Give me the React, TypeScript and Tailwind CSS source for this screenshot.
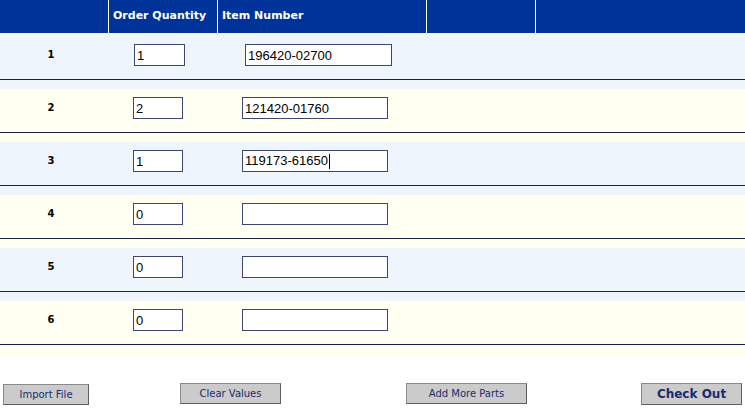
const rows = [
  { n: 1, qty: "1", item: "196420-02700" },
  { n: 2, qty: "2", item: "121420-01760" },
  { n: 3, qty: "1", item: "119173-61650", caret: true },
  { n: 4, qty: "0", item: "" },
  { n: 5, qty: "0", item: "" },
  { n: 6, qty: "0", item: "" },
];

const field =
  "h-[22px] border border-[#3c4670] bg-white px-[2px] font-['Liberation_Sans',Arial,sans-serif] text-[13px] leading-[20px] text-black outline-none";

function OrderRow({ n, qty, item, caret }: { n: number; qty: string; item: string; caret?: boolean }) {
  const first = n === 1;
  const last = n === 6;
  const bg = n % 2 === 1 ? "bg-[#eff5fd]" : "bg-[#fffff2]";
  return (
    <div className={bg}>
      <div className={`flex items-start ${first ? "h-[46px] pt-[11px]" : "h-[43px] pt-[8px]"}`}>
        <div className="w-[102px] text-center text-[10px] font-bold leading-[22px] text-black">{n}</div>
        {first ? (
          <input readOnly defaultValue={qty} className={`${field} ml-[32px] w-[51px]`} />
        ) : (
          <input readOnly defaultValue={qty} className={`${field} ml-[31px] w-[50px]`} />
        )}
        {caret ? (
          <div className={`${field} ml-[59px] flex w-[146px] items-center`}>
            <span>{item}</span>
            <span className="ml-[1px] h-[15px] w-px bg-black" />
          </div>
        ) : first ? (
          <input readOnly defaultValue={item} className={`${field} ml-[60px] w-[147px]`} />
        ) : (
          <input readOnly defaultValue={item} className={`${field} ml-[59px] w-[146px]`} />
        )}
      </div>
      <div className="h-px bg-[#1b1f4b]" />
      <div className={last ? "h-[12px]" : "h-[9px]"} />
    </div>
  );
}

const btn =
  "h-[21px] border border-[#8a8a8a] border-r-[#5e5e5e] border-b-[#5e5e5e] bg-[#cbcbcb] text-[10px] text-[#1b2a6a]";

export default function App() {
  return (
    <div className="h-[412px] w-[745px] bg-white font-['DejaVu_Sans',Verdana,sans-serif]">
      <div className="flex h-[33px] bg-[#003399] text-[11px] font-bold text-white">
        <div className="w-[108px]" />
        <div className="flex w-[109px] items-center border-l border-white pl-[4px]">Order Quantity</div>
        <div className="flex w-[209px] items-center border-l border-white pl-[4px]">Item Number</div>
        <div className="w-[109px] border-l border-white" />
        <div className="flex-1 border-l border-white" />
      </div>

      {rows.map((r) => (
        <OrderRow key={r.n} {...r} />
      ))}

      <div className="mt-[26px] flex items-start">
        <button className={`${btn} ml-[3px] mt-px w-[86px]`}>Import File</button>
        <button className={`${btn} ml-[91px] w-[101px]`}>Clear Values</button>
        <button className={`${btn} ml-[125px] w-[121px]`}>Add More Parts</button>
        <button className={`${btn} ml-[114px] h-[22px] w-[101px] text-[12px] font-bold text-[#0c2a7c]`}>Check Out</button>
      </div>
    </div>
  );
}
